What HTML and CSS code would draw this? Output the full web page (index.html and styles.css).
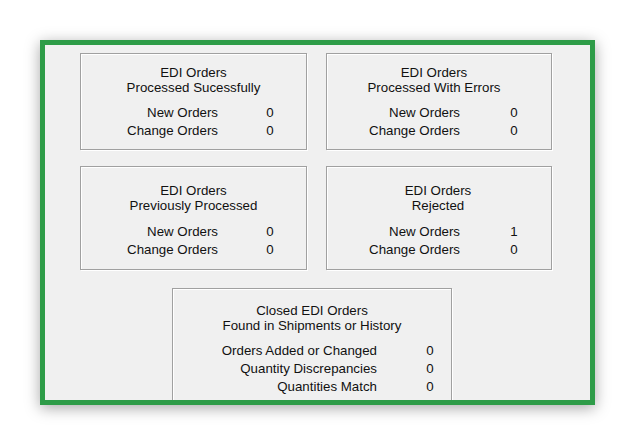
FILE: index.html
```html
<!DOCTYPE html>
<html>
<head>
<meta charset="utf-8">
<link rel="stylesheet" href="styles.css">
</head>
<body>
<div class="frame">
  <div class="grid">
    <div class="group g-top">
      <div class="title">EDI Orders<br>Processed Sucessfully</div>
      <div class="rows">
        <div class="label">New Orders</div><div class="val">0</div>
        <div class="label">Change Orders</div><div class="val">0</div>
      </div>
    </div>
    <div class="group g-top right">
      <div class="title">EDI Orders<br>Processed With Errors</div>
      <div class="rows">
        <div class="label">New Orders</div><div class="val">0</div>
        <div class="label">Change Orders</div><div class="val">0</div>
      </div>
    </div>
    <div class="group g-mid">
      <div class="title">EDI Orders<br>Previously Processed</div>
      <div class="rows">
        <div class="label">New Orders</div><div class="val">0</div>
        <div class="label">Change Orders</div><div class="val">0</div>
      </div>
    </div>
    <div class="group g-mid right">
      <div class="title">EDI Orders<br>Rejected</div>
      <div class="rows">
        <div class="label">New Orders</div><div class="val">1</div>
        <div class="label">Change Orders</div><div class="val">0</div>
      </div>
    </div>
  </div>
  <div class="bottom">
    <div class="group g-closed">
      <div class="title">Closed EDI Orders<br>Found in Shipments or History</div>
      <div class="rows">
        <div class="label">Orders Added or Changed</div><div class="val">0</div>
        <div class="label">Quantity Discrepancies</div><div class="val">0</div>
        <div class="label">Quantities Match</div><div class="val">0</div>
        <div class="label">&nbsp;</div><div class="val">&nbsp;</div>
      </div>
    </div>
  </div>
</div>
</body>
</html>
```
FILE: styles.css
```css
html, body {
  margin: 0;
  padding: 0;
  background: #ffffff;
}
body {
  width: 635px;
  height: 445px;
  overflow: hidden;
  font-family: "Liberation Sans", Arial, sans-serif;
  font-size: 13.3px;
  color: #111111;
}
.frame {
  box-sizing: border-box;
  margin: 40px 0 0 40px;
  width: 555px;
  height: 365px;
  border: 5px solid #2e9c48;
  background: #f0f0f0;
  box-shadow: 0 3px 14px rgba(0, 0, 0, 0.35);
  overflow: hidden;
  padding: 8px 38px 0 35px;
}
.grid {
  display: grid;
  grid-template-columns: 227px 226px;
  column-gap: 19px;
  row-gap: 16px;
}
.group {
  box-sizing: border-box;
  border: 1px solid #a0a0a0;
  box-shadow: inset 1px 1px 0 #ffffff, 1px 1px 0 #ffffff;
}
.title {
  text-align: center;
  line-height: 15px;
}
.rows {
  display: grid;
  grid-template-columns: 137px 24px;
  column-gap: 40px;
  line-height: 18px;
}
.label {
  text-align: right;
}
.val {
  text-align: center;
}
.right .rows {
  grid-template-columns: 133px 24px;
  column-gap: 42px;
}
.right .title {
  padding-right: 10px;
}
.g-top {
  padding: 11px 0 9px;
}
.g-top .title {
  margin-bottom: 9px;
}
.g-mid {
  padding: 16px 0 10px;
}
.g-mid .title {
  margin-bottom: 10px;
}
.right.g-mid .title {
  padding-right: 2px;
}
.bottom {
  display: flex;
  padding-left: 92px;
  margin-top: 18px;
}
.g-closed {
  width: 280px;
  padding: 14px 0 10px;
}
.g-closed .title {
  margin-bottom: 9px;
}
.g-closed .rows {
  grid-template-columns: 204px 24px;
  column-gap: 41px;
}
```
